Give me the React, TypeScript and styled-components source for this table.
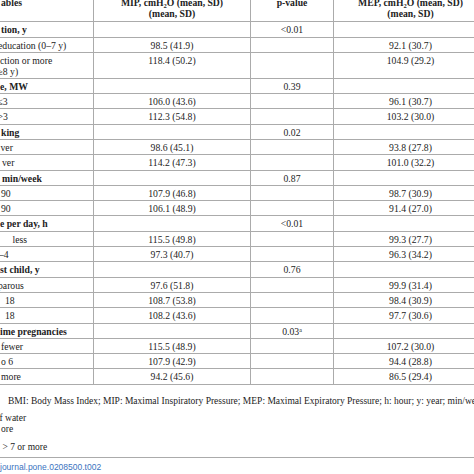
import React from 'react';
import styled, { createGlobalStyle } from 'styled-components';

const Global = createGlobalStyle`
  html, body {
    margin: 0;
    padding: 0;
    background: #ffffff;
    width: 474px;
    height: 474px;
    overflow: hidden;
  }
  #root {
    width: 474px;
    height: 474px;
    overflow: hidden;
  }
`;

const LINE = '#ababab';

const Page = styled.div`
  width: 487px;
  margin-top: -3.6px;
  font-family: "Liberation Serif", "Times New Roman", serif;
  color: #222222;
`;

const Row = styled.div`
  display: grid;
  grid-template-columns: 93px 157px 83px 154px;
  border-bottom: 1px solid ${LINE};
`;

const Cell = styled.div<{ $center?: boolean; $bold?: boolean; $head?: boolean }>`
  font-size: 9.7px;
  line-height: 10.5px;
  padding: ${(p) => (p.$head ? '2px 0 2px 0' : '3px 0 0.8px 0')};
  text-align: ${(p) => (p.$center ? 'center' : 'left')};
  font-weight: ${(p) => (p.$bold ? 700 : 400)};
  white-space: nowrap;
  & + & {
    border-left: 1px solid ${LINE};
  }
`;

const Label = styled.span<{ $shift: number }>`
  display: block;
  margin-left: ${(p) => p.$shift}px;
`;

const Sub = styled.sub`
  font-size: 6.5px;
  line-height: 0;
  vertical-align: -1.5px;
`;

const Sup = styled.sup`
  font-size: 6px;
  line-height: 0;
  vertical-align: 3.5px;
`;

const Notes = styled.div`
  padding-top: 10.9px;
  font-family: "Liberation Serif", "Times New Roman", serif;
  font-size: 9.5px;
  line-height: 11px;
  color: #222222;
`;

const Note = styled.p`
  margin: 0 0 6.5px 0;
  white-space: nowrap;
  &:last-child {
    margin-bottom: 0;
  }
`;

const Rule = styled.div`
  margin-top: 4.2px;
  border-top: 1px solid ${LINE};
`;

const DoiLink = styled.a`
  display: block;
  padding-top: 4px;
  font-family: "Liberation Sans", Arial, sans-serif;
  font-size: 8.5px;
  line-height: 11px;
  color: #3b73c0;
  text-decoration: none;
  white-space: nowrap;
`;

type Line = { text: string; shift: number };
type DataRow = {
  label: Line[];
  cat?: boolean;
  p?: string;
  pSup?: string;
  mip?: string;
  mep?: string;
};

const rows: DataRow[] = [
  { label: [{ text: 'tion, y', shift: 1 }], cat: true, p: '<0.01' },
  { label: [{ text: 'education (0–7 y)', shift: -2 }], mip: '98.5 (41.9)', mep: '92.1 (30.7)' },
  {
    label: [
      { text: 'ction or more', shift: 0 },
      { text: '≥8 y)', shift: -2.5 },
    ],
    mip: '118.4 (50.2)',
    mep: '104.9 (29.2)',
  },
  { label: [{ text: 'e, MW', shift: 0 }], cat: true, p: '0.39' },
  { label: [{ text: '≤3', shift: -2.5 }], mip: '106.0 (43.6)', mep: '96.1 (30.7)' },
  { label: [{ text: '>3', shift: -2.5 }], mip: '112.3 (54.8)', mep: '103.2 (30.0)' },
  { label: [{ text: 'king', shift: 1 }], cat: true, p: '0.02' },
  { label: [{ text: 'ver', shift: 0.5 }], mip: '98.6 (45.1)', mep: '93.8 (27.8)' },
  { label: [{ text: 'ver', shift: 2 }], mip: '114.2 (47.3)', mep: '101.0 (32.2)' },
  { label: [{ text: 'min/week', shift: 2 }], cat: true, p: '0.87' },
  { label: [{ text: '90', shift: 1 }], mip: '107.9 (46.8)', mep: '98.7 (30.9)' },
  { label: [{ text: '90', shift: 1 }], mip: '106.1 (48.9)', mep: '91.4 (27.0)' },
  { label: [{ text: 'e per day, h', shift: 0 }], cat: true, p: '<0.01' },
  { label: [{ text: 'less', shift: 12.5 }], mip: '115.5 (49.8)', mep: '99.3 (27.7)' },
  { label: [{ text: '–4', shift: -1 }], mip: '97.3 (40.7)', mep: '96.3 (34.2)' },
  { label: [{ text: 'st child, y', shift: 0 }], cat: true, p: '0.76' },
  { label: [{ text: 'parous', shift: -2 }], mip: '97.6 (51.8)', mep: '99.9 (31.4)' },
  { label: [{ text: '18', shift: 5 }], mip: '108.7 (53.8)', mep: '98.4 (30.9)' },
  { label: [{ text: '18', shift: 5 }], mip: '108.2 (43.6)', mep: '97.7 (30.6)' },
  { label: [{ text: 'ime pregnancies', shift: 0 }], cat: true, p: '0.03', pSup: 'a' },
  { label: [{ text: 'fewer', shift: 1 }], mip: '115.5 (48.9)', mep: '107.2 (30.0)' },
  { label: [{ text: 'o 6', shift: 1 }], mip: '107.9 (42.9)', mep: '94.4 (28.8)' },
  { label: [{ text: 'more', shift: 1 }], mip: '94.2 (45.6)', mep: '86.5 (29.4)' },
];

const Measure: React.FC<{ name: string }> = ({ name }) => (
  <>
    {name}, cmH<Sub>2</Sub>O (mean, SD)
    <br />
    (mean, SD)
  </>
);

export default function App() {
  return (
    <>
      <Global />
      <Page>
        <Row>
          <Cell $head $bold>
            <Label $shift={1}>ables</Label>
          </Cell>
          <Cell $head $bold $center>
            <Measure name="MIP" />
          </Cell>
          <Cell $head $bold $center>
            p-value
          </Cell>
          <Cell $head $bold $center>
            <Measure name="MEP" />
          </Cell>
        </Row>
        {rows.map((r, i) => (
          <Row key={i}>
            <Cell $bold={r.cat}>
              {r.label.map((l, j) => (
                <Label key={j} $shift={l.shift}>
                  {l.text}
                </Label>
              ))}
            </Cell>
            <Cell $center>{r.mip ?? ''}</Cell>
            <Cell $center>
              {r.p ?? ''}
              {r.pSup ? <Sup>{r.pSup}</Sup> : null}
            </Cell>
            <Cell $center>{r.mep ?? ''}</Cell>
          </Row>
        ))}
        <Notes>
          <Note>
            <Label $shift={8}>
              BMI: Body Mass Index; MIP: Maximal Inspiratory Pressure; MEP: Maximal Expiratory Pressure; h: hour; y: year; min/week: minutes per week
            </Label>
          </Note>
          <Note>
            <Label $shift={-0.5}>f water</Label>
            <Label $shift={1}>ore</Label>
          </Note>
          <Note>
            <Label $shift={2.5}>&gt; 7 or more</Label>
          </Note>
        </Notes>
        <Rule />
        <DoiLink href="#">journal.pone.0208500.t002</DoiLink>
      </Page>
    </>
  );
}
